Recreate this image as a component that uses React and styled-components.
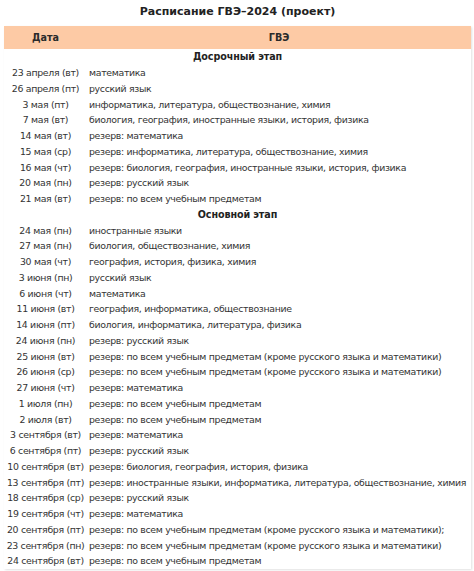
import React from "react";
import styled, { createGlobalStyle } from "styled-components";

const Global = createGlobalStyle`
  html, body { margin: 0; padding: 0; background: #ffffff; }
  body { font-family: "DejaVu Sans", Verdana, sans-serif; color: #333333; }
`;

const Page = styled.div`
  width: 474px;
  height: 571px;
  overflow: hidden;
  box-sizing: border-box;
  padding: 2px 3px 0 4px;
`;

const Title = styled.h1`
  margin: 0;
  height: 24px;
  font-size: 11px;
  font-weight: bold;
  text-align: center;
  line-height: 20px;
  color: #222222;
`;

const Frame = styled.div`
  box-shadow: 1px 1px 2px rgba(0, 0, 0, 0.12);
  background: #ffffff;
`;

const Table = styled.table`
  width: 100%;
  table-layout: fixed;
  border-collapse: collapse;
  font-size: 9.4px;
  letter-spacing: -0.33px;
`;

const HeadCell = styled.th`
  background: #fdcaa5;
  font-weight: bold;
  font-size: 9.6px;
  height: 23px;
  padding: 0;
  text-align: center;
  color: #2a2a2a;
  letter-spacing: 0;
  width: ${(p) => p.$w || "auto"};
`;

const Row = styled.tr`
  height: 15.75px;
`;

const SectionCell = styled.td`
  font-weight: bold;
  font-size: 9.6px;
  text-align: center;
  padding: 0;
  color: #222222;
  letter-spacing: -0.1px;
  height: 15.75px;
`;

const DateCell = styled.td`
  text-align: center;
  padding: 0;
  white-space: nowrap;
`;

const SubjCell = styled.td`
  text-align: left;
  padding: 0 0 0 2px;
  white-space: nowrap;
`;

const sections = [
  {
    title: "Досрочный этап",
    rows: [
      ["23 апреля (вт)", "математика"],
      ["26 апреля (пт)", "русский язык"],
      ["3 мая (пт)", "информатика, литература, обществознание, химия"],
      ["7 мая (вт)", "биология, география, иностранные языки, история, физика"],
      ["14 мая (вт)", "резерв: математика"],
      ["15 мая (ср)", "резерв: информатика, литература, обществознание, химия"],
      ["16 мая (чт)", "резерв: биология, география, иностранные языки, история, физика"],
      ["20 мая (пн)", "резерв: русский язык"],
      ["21 мая (вт)", "резерв: по всем учебным предметам"],
    ],
  },
  {
    title: "Основной этап",
    rows: [
      ["24 мая (пн)", "иностранные языки"],
      ["27 мая (пн)", "биология, обществознание, химия"],
      ["30 мая (чт)", "география, история, физика, химия"],
      ["3 июня (пн)", "русский язык"],
      ["6 июня (чт)", "математика"],
      ["11 июня (вт)", "география, информатика, обществознание"],
      ["14 июня (пт)", "биология, информатика, литература, физика"],
      ["24 июня (пн)", "резерв: русский язык"],
      ["25 июня (вт)", "резерв: по всем учебным предметам (кроме русского языка и математики)"],
      ["26 июня (ср)", "резерв: по всем учебным предметам (кроме русского языка и математики)"],
      ["27 июня (чт)", "резерв: математика"],
      ["1 июля (пн)", "резерв: по всем учебным предметам"],
      ["2 июля (вт)", "резерв: по всем учебным предметам"],
      ["3 сентября (вт)", "резерв: математика"],
      ["6 сентября (пт)", "резерв: русский язык"],
      ["10 сентября (вт)", "резерв: биология, география, история, физика"],
      ["13 сентября (пт)", "резерв: иностранные языки, информатика, литература, обществознание, химия"],
      ["18 сентября (ср)", "резерв: русский язык"],
      ["19 сентября (чт)", "резерв: математика"],
      ["20 сентября (пт)", "резерв: по всем учебным предметам (кроме русского языка и математики);"],
      ["23 сентября (пн)", "резерв: по всем учебным предметам (кроме русского языка и математики)"],
      ["24 сентября (вт)", "резерв: по всем учебным предметам"],
    ],
  },
];

export default function App() {
  return (
    <>
      <Global />
      <Page>
        <Title>Расписание ГВЭ–2024 (проект)</Title>
        <Frame>
          <Table>
            <thead>
              <tr>
                <HeadCell $w="83px">Дата</HeadCell>
                <HeadCell>ГВЭ</HeadCell>
              </tr>
            </thead>
            <tbody>
              {sections.map((s) => (
                <React.Fragment key={s.title}>
                  <Row>
                    <SectionCell colSpan={2}>{s.title}</SectionCell>
                  </Row>
                  {s.rows.map(([d, t]) => (
                    <Row key={d}>
                      <DateCell>{d}</DateCell>
                      <SubjCell>{t}</SubjCell>
                    </Row>
                  ))}
                </React.Fragment>
              ))}
            </tbody>
          </Table>
        </Frame>
      </Page>
    </>
  );
}
